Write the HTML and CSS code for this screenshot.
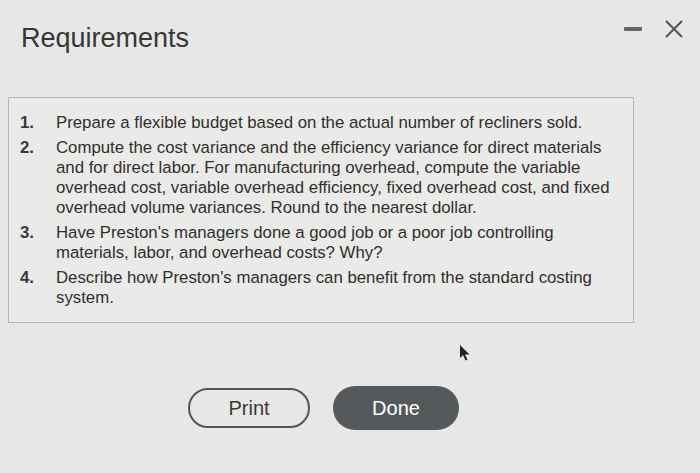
FILE: index.html
```html
<!DOCTYPE html>
<html lang="en">
<head>
<meta charset="utf-8">
<title>Requirements</title>
<link rel="stylesheet" href="styles.css">
</head>
<body>
<div class="dialog">
  <header class="header">
    <h1 class="title">Requirements</h1>
    <div class="controls">
      <span class="minimize"></span>
      <svg class="close" width="20" height="18" viewBox="0 0 20 18"><path d="M2 1 L18 17 M18 1 L2 17" stroke="#555" stroke-width="2" fill="none"/></svg>
    </div>
  </header>
  <div class="box">
    <ol class="reqs">
      <li><span class="num">1.</span><span class="txt">Prepare a flexible budget based on the actual number of recliners sold.</span></li>
      <li><span class="num">2.</span><span class="txt">Compute the cost variance and the efficiency variance for direct materials and for direct labor. For manufacturing overhead, compute the variable overhead cost, variable overhead efficiency, fixed overhead cost, and fixed overhead volume variances. Round to the nearest dollar.</span></li>
      <li><span class="num">3.</span><span class="txt">Have Preston's managers done a good job or a poor job controlling materials, labor, and overhead costs? Why?</span></li>
      <li><span class="num">4.</span><span class="txt">Describe how Preston's managers can benefit from the standard costing system.</span></li>
    </ol>
  </div>
  <div class="actions">
    <button class="btn btn-outline">Print</button>
    <button class="btn btn-dark">Done</button>
  </div>
  <svg class="cursor" width="12" height="18" viewBox="0 0 12 18"><path d="M1 1 L1 14 L4 11 L6.5 16.5 L8.5 15.5 L6 10.5 L10.5 10.5 Z" fill="#222"/></svg>
</div>
</body>
</html>
```

FILE: styles.css
```css
html, body {
  margin: 0;
  padding: 0;
}
body {
  background: #e7e7e5;
  font-family: "Liberation Sans", Arial, sans-serif;
  color: #2f2f2f;
  width: 700px;
  height: 473px;
  overflow: hidden;
}
.dialog {
  position: relative;
  height: 473px;
}
.header {
  display: flex;
  justify-content: space-between;
  align-items: flex-start;
  height: 97px;
  padding: 0 16px 0 21px;
  box-sizing: border-box;
}
.title {
  margin: 25px 0 0 0;
  font-size: 27px;
  line-height: 27px;
  font-weight: normal;
  color: #363636;
}
.controls {
  display: flex;
  align-items: center;
  gap: 22px;
  margin-top: 20px;
}
.minimize {
  display: block;
  width: 18px;
  height: 4px;
  background: #666;
  border-radius: 1px;
}
.close {
  display: block;
}
.box {
  margin-left: 8px;
  width: 626px;
  height: 226px;
  box-sizing: border-box;
  border: 1px solid #b4b4b2;
  background: #eaeae8;
  padding: 15px 17px 0 11px;
}
.reqs {
  list-style: none;
  margin: 0;
  padding: 0;
  font-size: 16.8px;
  line-height: 20px;
  color: #2f2f2f;
}
.reqs li {
  display: flex;
  margin-bottom: 5px;
}
.num {
  flex: 0 0 36px;
  font-weight: bold;
  color: #3a3a3a;
}
.txt {
  flex: 1;
}
.actions {
  display: flex;
  align-items: center;
  gap: 23px;
  padding-left: 188px;
  margin-top: 63px;
}
.btn {
  font-family: "Liberation Sans", Arial, sans-serif;
  font-size: 20px;
  border-radius: 22px;
  cursor: pointer;
  box-sizing: border-box;
}
.btn-outline {
  width: 122px;
  height: 40px;
  background: transparent;
  border: 2px solid #555;
  color: #3a3a3a;
}
.btn-dark {
  width: 126px;
  height: 44px;
  background: #55595c;
  border: none;
  color: #fff;
}
.cursor {
  position: absolute;
  left: 459px;
  top: 344px;
}
```
